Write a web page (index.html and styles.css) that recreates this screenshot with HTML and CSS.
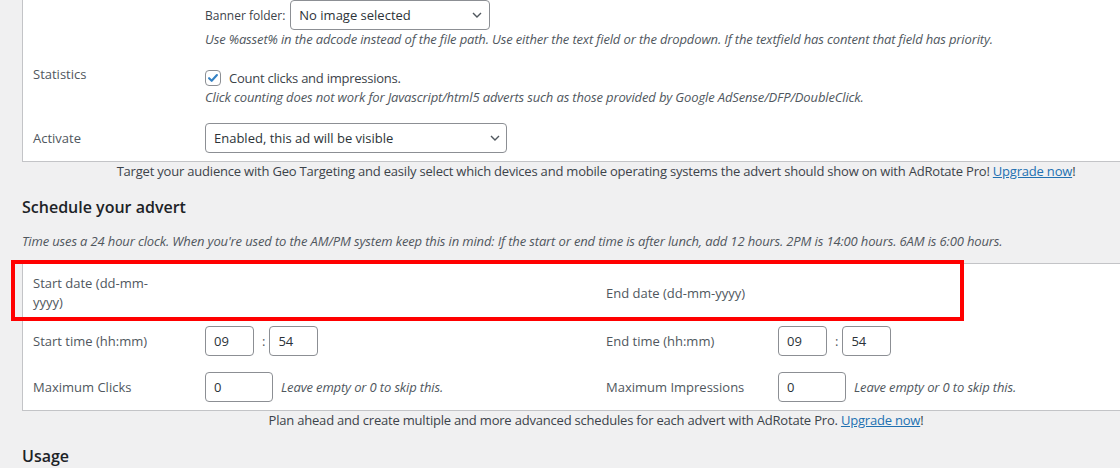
FILE: index.html
```html
<!DOCTYPE html>
<html lang="en">
<head>
<meta charset="utf-8">
<title>AdRotate - Edit advert</title>
<link rel="stylesheet" href="styles.css">
</head>
<body>
<div class="wrap">
  <table class="box box-top">
    <colgroup><col class="c-label"><col class="c-field"><col class="c-label"><col class="c-field"></colgroup>
    <tr>
      <th class="th-top"></th>
      <td colspan="3">
        <div class="line-select">
          <label class="inline-label" for="folder">Banner folder:</label>
          <div class="select-wrap sel-folder">
            <select id="folder" class="select"><option>No image selected</option></select>
            <svg class="chev" viewBox="0 0 10 6" width="10" height="6"><path d="M1 1l4 4 4-4" /></svg>
          </div>
        </div>
        <div class="desc">Use %asset% in the adcode instead of the file path. Use either the text field or the dropdown. If the textfield has content that field has priority.</div>
      </td>
    </tr>
    <tr>
      <th class="th-top">Statistics</th>
      <td colspan="3">
        <label class="check-line">
          <span class="checkbox"><svg viewBox="0 0 16 16" width="14" height="14"><path d="M3.5 8.2l3 3 6-6.6" /></svg></span>
          <span>Count clicks and impressions.</span>
        </label>
        <div class="desc">Click counting does not work for Javascript/html5 adverts such as those provided by Google AdSense/DFP/DoubleClick.</div>
      </td>
    </tr>
    <tr>
      <th>Activate</th>
      <td colspan="3">
        <div class="select-wrap sel-activate">
          <select class="select"><option>Enabled, this ad will be visible</option></select>
          <svg class="chev" viewBox="0 0 10 6" width="10" height="6"><path d="M1 1l4 4 4-4" /></svg>
        </div>
      </td>
    </tr>
  </table>
  <p class="promo">Target your audience with Geo Targeting and easily select which devices and mobile operating systems the advert should show on with AdRotate Pro! <a href="#">Upgrade now</a>!</p>

  <h2 class="section-title">Schedule your advert</h2>
  <p class="note">Time uses a 24 hour clock. When you're used to the AM/PM system keep this in mind: If the start or end time is after lunch, add 12 hours. 2PM is 14:00 hours. 6AM is 6:00 hours.</p>

  <table class="box">
    <colgroup><col class="c-label"><col class="c-field"><col class="c-label"><col class="c-field"></colgroup>
    <tr class="date-row">
      <th><span class="narrow-label">Start date (dd-mm-yyyy)</span></th>
      <td></td>
      <th>End date (dd-mm-yyyy)</th>
      <td></td>
    </tr>
    <tr>
      <th>Start time (hh:mm)</th>
      <td>
        <div class="time">
          <input class="field f-time" type="text" value="09"><span class="colon">:</span><input class="field f-time" type="text" value="54">
        </div>
      </td>
      <th>End time (hh:mm)</th>
      <td>
        <div class="time">
          <input class="field f-time" type="text" value="09"><span class="colon">:</span><input class="field f-time" type="text" value="54">
        </div>
      </td>
    </tr>
    <tr>
      <th>Maximum Clicks</th>
      <td>
        <div class="time">
          <input class="field f-max" type="text" value="0"><em class="hint">Leave empty or 0 to skip this.</em>
        </div>
      </td>
      <th>Maximum Impressions</th>
      <td>
        <div class="time">
          <input class="field f-max" type="text" value="0"><em class="hint">Leave empty or 0 to skip this.</em>
        </div>
      </td>
    </tr>
  </table>
  <p class="promo">Plan ahead and create multiple and more advanced schedules for each advert with AdRotate Pro. <a href="#">Upgrade now</a>!</p>

  <h2 class="section-title">Usage</h2>
</div>
<div class="highlight"></div>
</body>
</html>
```

FILE: styles.css
```css
html {
  overflow: hidden;
}

body {
  margin: 0;
  background: #f0f0f1;
  font-family: "Open Sans", "Noto Sans", sans-serif;
  font-size: 13px;
  line-height: 19px;
  color: #3c434a;
}

.wrap {
  margin-left: 22px;
  width: 1148px;
}

.box {
  width: 1148px;
  table-layout: fixed;
  border-collapse: separate;
  border-spacing: 0;
  background: #fff;
  border: 1px solid #c3c4c7;
}

.box-top {
  margin-top: -9px;
}

.c-label {
  width: 172px;
}

.c-field {
  width: 401px;
}

.box th,
.box td {
  padding: 8px 10px;
  text-align: left;
  font-weight: 400;
  vertical-align: middle;
}

.box th {
  color: #50575e;
}

.box th.th-top {
  vertical-align: top;
}

.box .date-row th {
  padding: 10px 10px 6px;
}

.narrow-label {
  display: block;
  max-width: 130px;
}

.line-select {
  display: flex;
  align-items: center;
  height: 30px;
}

.inline-label {
  color: #3c434a;
  font-size: 12px;
  margin-right: 5px;
}

.select-wrap {
  position: relative;
  height: 30px;
}

.sel-folder {
  width: 200px;
}

.sel-activate {
  width: 302px;
}

.select {
  appearance: none;
  -webkit-appearance: none;
  box-sizing: border-box;
  width: 100%;
  height: 30px;
  margin: 0;
  padding: 0 24px 0 8px;
  border: 1px solid #8c8f94;
  border-radius: 4px;
  background: #fff;
  font-family: inherit;
  font-size: 13px;
  color: #2c3338;
}

.chev {
  position: absolute;
  right: 8px;
  top: 12px;
  fill: none;
  stroke: #50575e;
  stroke-width: 1.4;
}

.sel-activate .chev {
  right: 7px;
}

.desc,
.note,
.hint {
  font-style: italic;
  color: #50575e;
  letter-spacing: -0.14px;
}

.check-line {
  display: flex;
  align-items: center;
  height: 23px;
  padding-top: 3px;
  box-sizing: border-box;
  color: #3c434a;
  letter-spacing: -0.25px;
}

.checkbox {
  box-sizing: border-box;
  width: 16px;
  height: 16px;
  border: 1px solid #8c8f94;
  border-radius: 4px;
  background: #fff;
  display: flex;
  align-items: center;
  justify-content: center;
  margin-right: 8px;
}

.checkbox path {
  fill: none;
  stroke: #3582c4;
  stroke-width: 2.4;
  stroke-linecap: round;
  stroke-linejoin: round;
}

.promo {
  margin: 0;
  text-align: center;
  color: #3c434a;
  letter-spacing: -0.2px;
}

.promo a {
  color: #2271b1;
  text-decoration: underline;
}

.section-title {
  margin: 15px 0 0;
  font-size: 16px;
  line-height: 22px;
  font-weight: 600;
  color: #1d2327;
}

.note {
  margin: 14px 0 12px;
}

.time {
  display: flex;
  align-items: center;
  height: 30px;
}

.field {
  box-sizing: border-box;
  height: 30px;
  margin: 0;
  padding: 0 8px;
  border: 1px solid #8c8f94;
  border-radius: 4px;
  background: #fff;
  font-family: inherit;
  font-size: 13px;
  color: #2c3338;
}

.f-time {
  width: 49px;
}

.f-max {
  width: 68px;
}

.colon {
  margin: 0 4px 0 8px;
  color: #50575e;
}

.hint {
  margin-left: 8px;
}

.highlight {
  position: absolute;
  left: 11px;
  top: 260px;
  width: 953px;
  height: 61px;
  box-sizing: border-box;
  border: 4px solid #ff0000;
  pointer-events: none;
}
```
